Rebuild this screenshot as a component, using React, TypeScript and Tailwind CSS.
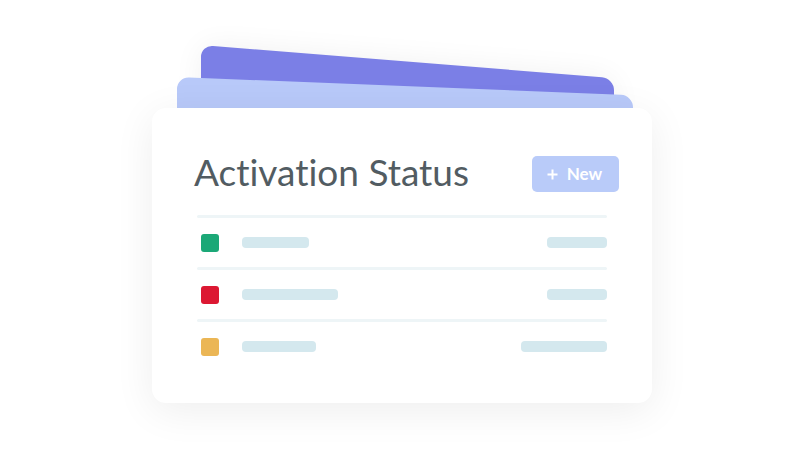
const rows = [
  { color: 'bg-[#1ba877]', left: 'w-[67px]', right: 'w-[60px]' },
  { color: 'bg-[#dc1832]', left: 'w-[96px]', right: 'w-[60px]' },
  { color: 'bg-[#ebb655]', left: 'w-[74px]', right: 'w-[86px]' },
];

export default function App() {
  return (
    <div className="relative w-[800px] h-[450px] overflow-hidden bg-white font-['Lato',sans-serif] [font-variant-ligatures:none]">
      {/* stacked cards behind */}
      <div className="absolute left-[201px] top-[45px] w-[413px] h-[120px] origin-top-left skew-y-[4.6deg] rounded-[12px] bg-[#7b7fe6] shadow-[0_0_30px_rgba(0,0,0,0.06)]"></div>
      <div className="absolute left-[177px] top-[77px] w-[456px] h-[100px] origin-top-left skew-y-[2.3deg] rounded-[12px] bg-[#b8c9f9]"></div>

      <div className="pt-[108px] pl-[152px]">
        <div className="relative flex flex-col w-[500px] h-[295px] rounded-[14px] bg-white pt-[48px] shadow-[0_8px_40px_rgba(0,0,0,0.07)]">
          <div className="flex items-start justify-between h-[36px] pl-[42px] pr-[33px]">
            <h1 className="-mt-[2px] text-[37px] leading-[36px] font-normal text-[#525c62]">Activation Status</h1>
            <button className="flex items-center justify-center gap-[9px] w-[87px] h-[36px] rounded-[5px] bg-[#b9cbf9] text-[17px] font-bold text-white">
              <svg width="11" height="11" viewBox="0 0 11 11" className="-ml-[2px]">
                <path d="M5.5 0.5v10M0.5 5.5h10" stroke="white" strokeWidth="2" />
              </svg>
              <span>New</span>
            </button>
          </div>

          <div className="mt-[23px] px-[45px]">
            {rows.map((r, i) => (
              <div key={i}>
                <div className="h-[3px] rounded-full bg-[#eef5f7]"></div>
                <div className="flex items-center h-[49px] pl-[4px]">
                  <div className={`w-[18px] h-[18px] rounded-[3px] ${r.color}`}></div>
                  <div className={`ml-[23px] h-[11px] rounded-[4px] bg-[#d4e8ee] ${r.left}`}></div>
                  <div className={`ml-auto h-[11px] rounded-[4px] bg-[#d4e8ee] ${r.right}`}></div>
                </div>
              </div>
            ))}
          </div>
        </div>
      </div>
    </div>
  );
}
